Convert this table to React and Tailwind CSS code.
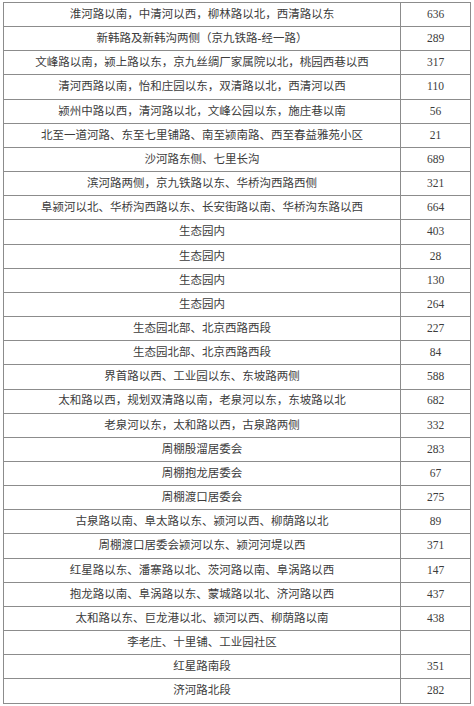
import React from 'react';

const rows = [
    ['淮河路以南，中清河以西，柳林路以北，西清路以东', '636'],
    ['新韩路及新韩沟两侧（京九铁路-经一路）', '289'],
    ['文峰路以南，颍上路以东，京九丝绸厂家属院以北，桃园西巷以西', '317'],
    ['清河西路以南，怡和庄园以东，双清路以北，西清河以西', '110'],
    ['颍州中路以西，清河路以北，文峰公园以东，施庄巷以南', '56'],
    ['北至一道河路、东至七里铺路、南至颍南路、西至春益雅苑小区', '21'],
    ['沙河路东侧、七里长沟', '689'],
    ['滨河路两侧，京九铁路以东、华桥沟西路西侧', '321'],
    ['阜颍河以北、华桥沟西路以东、长安街路以南、华桥沟东路以西', '664'],
    ['生态园内', '403'],
    ['生态园内', '28'],
    ['生态园内', '130'],
    ['生态园内', '264'],
    ['生态园北部、北京西路西段', '227'],
    ['生态园北部、北京西路西段', '84'],
    ['界首路以西、工业园以东、东坡路两侧', '588'],
    ['太和路以西，规划双清路以南，老泉河以东，东坡路以北', '682'],
    ['老泉河以东，太和路以西，古泉路两侧', '332'],
    ['周棚殷溜居委会', '283'],
    ['周棚抱龙居委会', '67'],
    ['周棚渡口居委会', '275'],
    ['古泉路以南、阜太路以东、颍河以西、柳荫路以北', '89'],
    ['周棚渡口居委会颍河以东、颍河河堤以西', '371'],
    ['红星路以东、潘寨路以北、茨河路以南、阜涡路以西', '147'],
    ['抱龙路以南、阜涡路以东、蒙城路以北、济河路以西', '437'],
    ['太和路以东、巨龙港以北、颍河以西、柳荫路以南', '438'],
    ['李老庄、十里铺、工业园社区', ''],
    ['红星路南段', '351'],
    ['济河路北段', '282'],
];

export default function App() {
    return (
        <div className="w-[474px] h-[706px] bg-white pt-[2px] pl-[3px] overflow-hidden font-['Liberation_Serif','Noto_Sans_CJK_SC',serif] text-[#3c3c3c]">
            <div className="w-[468px] border-t border-l border-r border-[#8c8c8c]">
                {rows.map(([place, count], i) => (
                    <div
                        key={i}
                        className="flex h-[24.17px] border-b border-[#8c8c8c]">
                        <div className="w-[397px] border-r border-[#8c8c8c] flex items-center justify-center text-[11.5px] whitespace-nowrap">
                            {place}
                        </div>
                        <div className="flex-1 flex items-center justify-center text-[11.5px]">
                            {count}
                        </div>
                    </div>
                ))}
            </div>
        </div>
    );
}
